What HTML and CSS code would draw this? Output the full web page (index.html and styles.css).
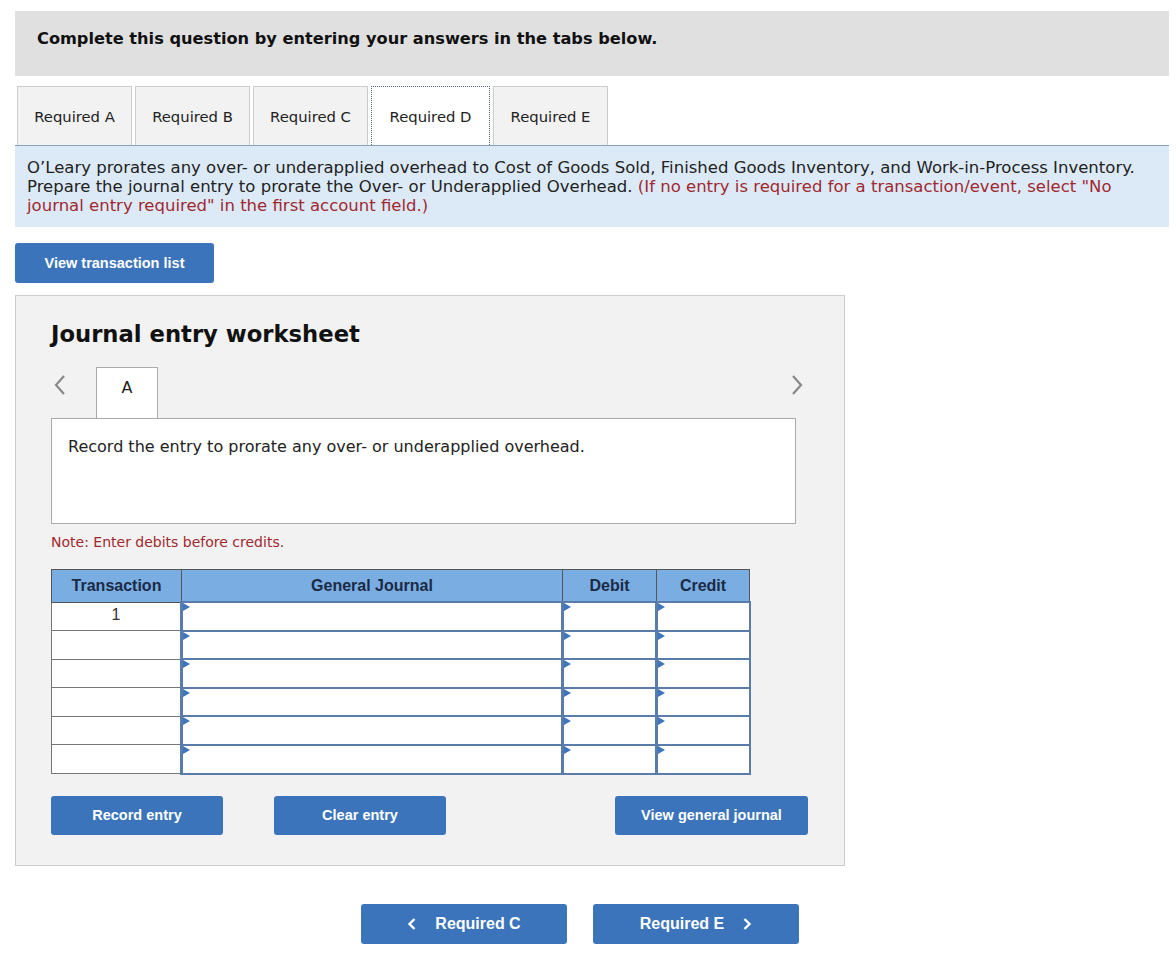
FILE: index.html
```html
<!DOCTYPE html>
<html lang="en">
<head>
    <meta charset="UTF-8">
    <title>Journal entry worksheet</title>
    <link rel="stylesheet" href="styles.css">
</head>
<body>
    <div class="page">
        <div class="question-head">Complete this question by entering your answers in the tabs below.</div>

        <div class="tabs">
            <div class="tab">Required A</div>
            <div class="tab">Required B</div>
            <div class="tab">Required C</div>
            <div class="tab active">Required D</div>
            <div class="tab">Required E</div>
        </div>

        <div class="prompt">
            O&rsquo;Leary prorates any over- or underapplied overhead to Cost of Goods Sold, Finished Goods Inventory, and Work-in-Process Inventory. Prepare the journal entry to prorate the Over- or Underapplied Overhead. <span class="red">(If no entry is required for a transaction/event, select "No journal entry required" in the first account field.)</span>
        </div>

        <button class="btn btn-list">View transaction list</button>

        <div class="worksheet">
            <h2>Journal entry worksheet</h2>

            <div class="ws-tabs">
                <span class="chev">
                    <svg width="14" height="22" viewBox="0 0 14 22"><path d="M11 2 L3 11 L11 20" fill="none" stroke="#888" stroke-width="2.2"/></svg>
                </span>
                <div class="ws-tab">A</div>
                <span class="spacer"></span>
                <span class="chev chev-next">
                    <svg width="14" height="22" viewBox="0 0 14 22"><path d="M3 2 L11 11 L3 20" fill="none" stroke="#888" stroke-width="2.2"/></svg>
                </span>
            </div>

            <div class="ws-box">Record the entry to prorate any over- or underapplied overhead.</div>

            <p class="note">Note: Enter debits before credits.</p>

            <table class="journal">
                <thead>
                    <tr>
                        <th class="c-trans">Transaction</th>
                        <th class="c-acct">General Journal</th>
                        <th class="c-debit">Debit</th>
                        <th class="c-credit">Credit</th>
                    </tr>
                </thead>
                <tbody>
                    <tr><td class="trans">1</td><td class="inp"></td><td class="inp"></td><td class="inp"></td></tr>
                    <tr><td class="trans"></td><td class="inp"></td><td class="inp"></td><td class="inp"></td></tr>
                    <tr><td class="trans"></td><td class="inp"></td><td class="inp"></td><td class="inp"></td></tr>
                    <tr><td class="trans"></td><td class="inp"></td><td class="inp"></td><td class="inp"></td></tr>
                    <tr><td class="trans"></td><td class="inp"></td><td class="inp"></td><td class="inp"></td></tr>
                    <tr><td class="trans"></td><td class="inp"></td><td class="inp"></td><td class="inp"></td></tr>
                </tbody>
            </table>

            <div class="ws-actions">
                <button class="btn btn-record">Record entry</button>
                <button class="btn btn-clear">Clear entry</button>
                <span class="spacer"></span>
                <button class="btn btn-view">View general journal</button>
            </div>
        </div>

        <div class="nav">
            <button class="btn btn-nav">
                <svg width="10" height="14" viewBox="0 0 10 14"><path d="M7.5 2 L2.5 7 L7.5 12" fill="none" stroke="#fff" stroke-width="2.4"/></svg>
                <span>Required C</span>
            </button>
            <button class="btn btn-nav">
                <span>Required E</span>
                <svg width="10" height="14" viewBox="0 0 10 14"><path d="M2.5 2 L7.5 7 L2.5 12" fill="none" stroke="#fff" stroke-width="2.4"/></svg>
            </button>
        </div>
    </div>
</body>
</html>
```

FILE: styles.css
```css
body {
    margin: 0;
    background: #fff;
    font-family: 'DejaVu Sans', Verdana, sans-serif;
    color: #222;
}
.page {
    padding: 11px 7px 0 15px;
}
.question-head {
    background: #e0e0e0;
    height: 65px;
    padding: 18px 0 0 22px;
    box-sizing: border-box;
    font-weight: bold;
    font-size: 16.2px;
    color: #111;
}

/* requirement tabs */
.tabs {
    display: flex;
    gap: 3px;
    margin-top: 10px;
    padding-left: 2px;
}
.tab {
    width: 115px;
    height: 59px;
    box-sizing: border-box;
    display: flex;
    align-items: center;
    justify-content: center;
    background: #f2f2f2;
    border: 1px solid #ccc;
    border-bottom: none;
    font-size: 14.8px;
    white-space: nowrap;
    color: #222;
}
.tab.active {
    width: 119px;
    background: #fff;
    border: 1px dotted #4a6288;
    border-bottom: none;
}
.prompt {
    background: #dceaf8;
    border-top: 1px solid #8aa0b8;
    padding: 12px 12px 12px;
    font-size: 16.5px;
    line-height: 19px;
    color: #222;
}
.red {
    color: #a0282f;
}

/* buttons */
.btn {
    display: inline-flex;
    align-items: center;
    justify-content: center;
    background: #3b74ba;
    color: #fff;
    border: none;
    border-radius: 3px;
    font-family: 'Liberation Sans', Arial, sans-serif;
    font-weight: bold;
    font-size: 14.5px;
    cursor: pointer;
    padding: 0;
}
.btn-list {
    width: 199px;
    height: 40px;
    margin-top: 16px;
}

/* worksheet */
.worksheet {
    width: 830px;
    box-sizing: border-box;
    margin-top: 12px;
    background: #f2f2f2;
    border: 1px solid #ccc;
    padding: 22px 35px 30px;
}
.worksheet h2 {
    margin: 0;
    font-size: 22.7px;
    color: #111;
    line-height: 32px;
}
.ws-tabs {
    display: flex;
    align-items: flex-start;
    margin-top: 17px;
    height: 51px;
}
.chev {
    display: flex;
    width: 43px;
    padding-left: 2px;
    padding-top: 7px;
}
.chev-next {
    width: auto;
    margin-right: 5px;
}
.spacer {
    flex: 1;
}
.ws-tab {
    width: 62px;
    height: 51px;
    box-sizing: border-box;
    margin-bottom: -1px;
    background: #fff;
    border: 1px solid #aaa;
    border-bottom: none;
    text-align: center;
    padding-top: 10px;
    font-size: 16px;
    position: relative;
    z-index: 1;
}
.ws-box {
    width: 745px;
    height: 106px;
    box-sizing: border-box;
    background: #fff;
    border: 1px solid #aaa;
    padding: 18px 16px;
    font-size: 16px;
    color: #222;
}
.note {
    margin: 10px 0 0;
    font-size: 14px;
    color: #a0282f;
}

/* journal table */
.journal {
    margin-top: 19px;
    border-collapse: collapse;
    font-family: 'Liberation Sans', Arial, sans-serif;
}
.journal th {
    background: #7aaee3;
    border: 1px solid #555;
    height: 31px;
    font-size: 16px;
    font-weight: bold;
    color: #1b2a45;
    padding: 0;
}
.c-trans { width: 129px; }
.c-acct { width: 380px; }
.c-debit { width: 93px; }
.c-credit { width: 92px; }
.journal td {
    height: 28.6px;
    padding: 0;
    box-sizing: border-box;
}
.trans {
    background: #fff;
    border: 1px solid #777;
    text-align: center;
    vertical-align: top;
    padding-top: 3px !important;
    font-size: 16px;
    color: #333;
}
.inp {
    background: #fff;
    border: 2px solid #5a7cab;
    border-left-width: 3px;
    position: relative;
}
.inp::before {
    content: "";
    position: absolute;
    left: 0;
    top: 0;
    border-left: 7px solid #3d76bd;
    border-top: 4px solid transparent;
    border-bottom: 4px solid transparent;
}
.ws-actions {
    display: flex;
    gap: 51px;
    margin-top: 21px;
}
.btn-record, .btn-clear {
    width: 172px;
    height: 39px;
}
.btn-view {
    width: 193px;
    height: 39px;
    margin-right: 1px;
}

/* bottom navigation */
.nav {
    display: flex;
    gap: 26px;
    padding-left: 346px;
    margin-top: 38px;
}
.btn-nav {
    width: 206px;
    height: 40px;
    gap: 18px;
    font-size: 16px;
}
```
